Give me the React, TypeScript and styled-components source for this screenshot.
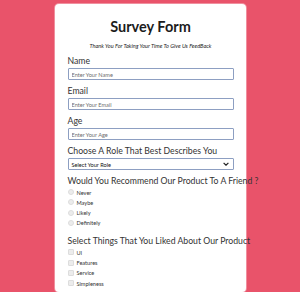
import React from "react";
import styled, { createGlobalStyle } from "styled-components";

const Global = createGlobalStyle`
  html, body { margin: 0; padding: 0; }
  body { background: #e9536a; font-family: "Lato", "Noto Sans", sans-serif; }
`;

const Page = styled.div`
  display: flex;
  justify-content: center;
  padding-top: 4px;
  height: 292px;
  overflow: hidden;
  box-sizing: border-box;
`;

const Card = styled.form`
  width: 191px;
  background: #fff;
  border-radius: 4px;
  box-sizing: border-box;
  padding: 13px 12px 0 13px;
  display: flex;
  flex-direction: column;
  box-shadow: 0 0 0 1px rgba(255,255,255,0.35);
`;

const Title = styled.h1`
  margin: 0;
  text-align: center;
  font-family: "Lato", sans-serif;
  font-size: 14.5px;
  font-weight: 700;
  color: #1c1c1c;
  line-height: 20px;
`;

const Sub = styled.p`
  margin: 5px 0 0;
  text-align: center;
  font-size: 5.6px;
  font-style: italic;
  color: #222;
  line-height: 7px;
`;

const Label = styled.div<{ $top: number }>`
  margin-top: ${(p) => p.$top}px;
  font-size: 8.7px;
  color: #333;
  line-height: 12px;
  white-space: nowrap;
`;

const Input = styled.input`
  margin-top: 1px;
  width: 100%;
  height: 12px;
  box-sizing: border-box;
  border: 1.3px solid #8d9fc2;
  border-radius: 1px;
  padding: 0 3px;
  font-family: "Lato", sans-serif;
  font-size: 5.6px;
  outline: none;
  &::placeholder { color: #6e6e6e; }
`;

const Select = styled.div`
  margin-top: 1px;
  height: 12px;
  box-sizing: border-box;
  border: 1.3px solid #8d9fc2;
  border-radius: 1px;
  padding: 0 4px 0 3px;
  display: flex;
  align-items: center;
  justify-content: space-between;
  font-size: 5.6px;
  color: #111;
`;

const Options = styled.div`
  display: flex;
  flex-direction: column;
  gap: 3.3px;
  margin-top: 1.5px;
`;

const Option = styled.div`
  display: flex;
  align-items: center;
  gap: 3px;
  font-size: 5.6px;
  color: #333;
  height: 7px;
`;

const Radio = styled.span`
  width: 6px;
  height: 6px;
  border-radius: 50%;
  background: #ececec;
  border: 0.5px solid #ddd;
  box-sizing: border-box;
`;

const Check = styled.span`
  width: 6px;
  height: 6px;
  border-radius: 1px;
  background: #ececec;
  border: 0.5px solid #ddd;
  box-sizing: border-box;
`;

export default function App() {
  return (
    <>
      <Global />
      <Page>
        <Card>
          <Title>Survey Form</Title>
          <Sub>Thank You For Taking Your Time To Give Us FeedBack</Sub>
          <Label $top={6}>Name</Label>
          <Input placeholder="Enter Your Name" />
          <Label $top={5}>Email</Label>
          <Input placeholder="Enter Your Email" />
          <Label $top={5}>Age</Label>
          <Input placeholder="Enter Your Age" />
          <Label $top={5}>Choose A Role That Best Describes You</Label>
          <Select>
            <span>Select Your Role</span>
            <svg width="6" height="4" viewBox="0 0 6 4">
              <path d="M0.6 0.8 L3 3.2 L5.4 0.8" fill="none" stroke="#222" strokeWidth="1.2" />
            </svg>
          </Select>
          <Label $top={5}>Would You Recommend Our Product To A Friend ?</Label>
          <Options>
            {["Never", "Maybe", "Likely", "Definitely"].map((t) => (
              <Option key={t}><Radio />{t}</Option>
            ))}
          </Options>
          <Label $top={9}>Select Things That You Liked About Our Product</Label>
          <Options>
            {["UI", "Features", "Service", "Simpleness"].map((t) => (
              <Option key={t}><Check />{t}</Option>
            ))}
          </Options>
        </Card>
      </Page>
    </>
  );
}
